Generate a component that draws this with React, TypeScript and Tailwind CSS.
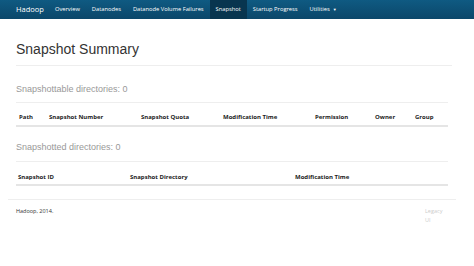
const navItems = ["Overview", "Datanodes", "Datanode Volume Failures", "Snapshot", "Startup Progress"];

const Navbar = () => (
  <div className="flex h-[19px] items-stretch bg-gradient-to-b from-[#0f5a82] to-[#0b476a] pl-[16px] text-white" style={{ fontFamily: "'Open Sans', sans-serif" }}>
    <div className="mr-[5px] flex items-center text-[7.5px]">Hadoop</div>
    {navItems.map((item) => (
      <div
        key={item}
        className={
          "flex items-center px-[6px] text-[5.75px] " + (item === "Snapshot" ? "bg-[#08354f]" : "")
        }
      >
        {item}
      </div>
    ))}
    <div className="flex items-center px-[6px] text-[5.75px]">
      Utilities <span className="ml-[3px] text-[4px]">▼</span>
    </div>
  </div>
);

const App = () => {
  return (
    <div className="min-h-[266px] w-[474px] bg-white" style={{ fontFamily: "'Liberation Sans', Arial, sans-serif" }}>
      <Navbar />
      <div className="px-[16px]">
        <div className="mt-[21px] border-b border-[#eeeeee] pb-[7px] w-[436px]">
          <h1 className="text-[14px] leading-[18px] text-[#333333]">Snapshot Summary</h1>
        </div>
        <div className="mt-[17px] w-[432px]">
          <h2 className="text-[9px] leading-[12px] text-[#999999] pb-[7px] border-b border-[#eeeeee]">Snapshottable directories: 0</h2>
          <div
            className="mt-[6px] grid grid-cols-[30px_92px_82px_92px_60px_40px_36px] border-b-2 border-[#e5e5e5] pt-[4px] pb-[3px] pl-[3px] text-[6px] font-bold text-[#222222]"
            style={{ fontFamily: "'Open Sans', sans-serif" }}
          >
            <span>Path</span>
            <span>Snapshot Number</span>
            <span>Snapshot Quota</span>
            <span>Modification Time</span>
            <span>Permission</span>
            <span>Owner</span>
            <span>Group</span>
          </div>
        </div>
        <div className="mt-[14px] w-[432px]">
          <h2 className="text-[9px] leading-[12px] text-[#999999] pb-[8px] border-b border-[#eeeeee]">Snapshotted directories: 0</h2>
          <div
            className="mt-[7px] grid grid-cols-[112px_165px_1fr] border-b-2 border-[#e5e5e5] pt-[4px] pb-[2px] pl-[2px] text-[6px] font-bold text-[#222222]"
            style={{ fontFamily: "'Open Sans', sans-serif" }}
          >
            <span>Snapshot ID</span>
            <span>Snapshot Directory</span>
            <span>Modification Time</span>
          </div>
        </div>
      </div>
      <div className="mx-[8px] mt-[13px] w-[448px] border-t border-[#eeeeee] pt-[7px] pl-[8px] pr-[13px] flex justify-between" style={{ fontFamily: "'Open Sans', sans-serif" }}>
        <span className="text-[5.5px] text-[#333333]">Hadoop, 2014.</span>
        <span className="text-[5.5px] leading-[9px] text-[#cccccc] w-[18px]">Legacy UI</span>
      </div>
    </div>
  );
};

export default App;
